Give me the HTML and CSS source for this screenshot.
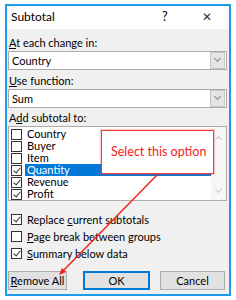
FILE: index.html
```html
<!DOCTYPE html>
<html lang="en">
  <head>
    <meta charset="UTF-8">
    <title>Subtotal</title>
    <link rel="stylesheet" href="styles.css">
  </head>
  <body>
    <div id="dialog">
      <div id="titlebar">
        <div class="title">Subtotal</div>
        <div class="help">?</div>
        <div class="close">&#x2715;</div>
      </div>

      <div id="content">
        <div class="label label_first"><u>A</u>t each change in:</div>
        <div class="combo">
          <span class="combo_text">Country</span>
          <div class="drop"><span class="chev"></span></div>
        </div>

        <div class="label"><u>U</u>se function:</div>
        <div class="combo">
          <span class="combo_text">Sum</span>
          <div class="drop"><span class="chev"></span></div>
        </div>

        <div class="label label_list">A<u>d</u>d subtotal to:</div>
        <div class="listbox">
          <div class="items">
            <div class="item"><span class="cb"></span><span class="txt">Country</span></div>
            <div class="item"><span class="cb"></span><span class="txt">Buyer</span></div>
            <div class="item"><span class="cb"></span><span class="txt">Item</span></div>
            <div class="item selected"><span class="cb on"></span><span class="txt">Quantity</span></div>
            <div class="item"><span class="cb on"></span><span class="txt">Revenue</span></div>
            <div class="item"><span class="cb on"></span><span class="txt">Profit</span></div>
          </div>
          <div class="scroll">
            <span class="chev up"></span>
            <span class="chev"></span>
          </div>
        </div>

        <div class="options">
          <div class="check"><span class="cb on"></span>Replace&nbsp;<u>c</u>urrent subtotals</div>
          <div class="check"><span class="cb"></span><u>P</u>age break between groups</div>
          <div class="check"><span class="cb on"></span><u>S</u>ummary below data</div>
        </div>

        <div class="buttons">
          <div class="btn btn_remove"><u>R</u>emove All</div>
          <div class="btn btn_ok">OK</div>
          <div class="btn btn_cancel">Cancel</div>
        </div>
      </div>

      <!-- annotation drawn over the dialog -->
      <div class="callout">Select this option</div>
      <svg class="arrow" width="222" height="288" viewBox="0 0 222 288">
        <line x1="150" y1="169" x2="55" y2="266" stroke="#f21c1c" stroke-width="1.4"/>
        <polygon points="52,269 59,266 55,262" fill="#f21c1c"/>
      </svg>
    </div>
  </body>
</html>
```

FILE: styles.css
```css
body {
  margin: 0;
  background-color: #ffffff;
  font-family: Lato, "Noto Sans", sans-serif;
  font-size: 11px;
  color: #000000;
}
u {
  text-decoration-thickness: 1px;
  text-underline-offset: 1px;
}
#dialog {
  position: relative;
  width: 222px;
  height: 288px;
  margin: 4px 0 0 5px;

  border: 2px solid #1c9be6;
  background-color: #f0f0f0;
}
#titlebar {
  height: 23px;
  background-color: #ffffff;

  display: flex;
  flex-direction: row;
  align-items: center;
}
.title {
  margin-left: 4px;
  flex: 1;
  margin-top: -3px;
  font-size: 12px;
}
.help {
  width: 14px;
  margin-right: 26px;
  margin-top: -3px;
  font-size: 12.5px;
}
.close {
  width: 14px;
  margin-right: 13px;
  margin-top: -3px;
  font-size: 12px;
  color: #333333;
}
#content {
  padding: 0 2px 0 1px;
}
.label {
  height: 14px;
  line-height: 14px;
  padding-left: 1px;
  margin-top: 4px;
}
.label_first {
  margin-top: 7px;
}
.label_list {
  margin-top: 3px;
}
.combo {
  height: 17px;
  margin-top: 1px;
  border: 1px solid #acacac;
  background-color: #ffffff;

  display: flex;
  flex-direction: row;
  align-items: center;
}
.combo_text {
  flex: 1;
  padding-left: 3px;
}
.drop {
  width: 13px;
  height: 15px;
  margin-right: 1px;
  border: 1px solid #c4c4c4;
  background-color: #e5e5e5;

  display: flex;
  justify-content: center;
  align-items: center;
}
.chev {
  width: 4px;
  height: 4px;
  border-right: 1px solid #8a8a8a;
  border-bottom: 1px solid #8a8a8a;
  transform: translateY(-2px) rotate(45deg);
}
.listbox {
  height: 73px;
  margin-top: 1px;
  border: 1px solid #acacac;
  background-color: #ffffff;

  display: flex;
  flex-direction: row;
}
.items {
  flex: 1;
  padding-top: 1px;
}
.item {
  height: 12px;
  line-height: 12px;

  display: flex;
  flex-direction: row;
  align-items: center;
}
.item .cb {
  margin-left: 2px;
  margin-right: 3px;
}
.item .txt {
  flex: 1;
  height: 12px;
  padding-left: 2px;
  overflow: hidden;
}
.item.selected .txt {
  background-color: #0078d7;
  color: #ffffff;
}
.scroll {
  width: 15px;
  background-color: #f7f7f7;

  display: flex;
  flex-direction: column;
  justify-content: space-between;
  align-items: center;
  padding: 9px 0 6px 0;
}
.scroll .chev {
  border-color: #c8c8c8;
}
.scroll .up {
  transform: translateY(1px) rotate(225deg);
}
.cb {
  position: relative;
  width: 9px;
  height: 9px;
  border: 1px solid #333333;
  background-color: #ffffff;
  flex-shrink: 0;
}
.cb.on::after {
  content: "";
  position: absolute;
  left: 3px;
  top: 0px;
  width: 3px;
  height: 6px;
  border-right: 1px solid #333333;
  border-bottom: 1px solid #333333;
  transform: rotate(40deg);
}
.options {
  margin-top: 10px;
}
.check {
  height: 17px;
  line-height: 17px;

  display: flex;
  flex-direction: row;
  align-items: center;
}
.check .cb {
  margin-left: 3px;
  margin-right: 5px;
}
.buttons {
  margin-top: 9px;

  display: flex;
  flex-direction: row;
}
.btn {
  height: 17px;
  line-height: 17px;
  border: 1px solid #adadad;
  background-color: #e1e1e1;
  text-align: center;
  white-space: nowrap;
}
.btn_remove {
  width: 57px;
}
.btn_ok {
  width: 63px;
  height: 15px;
  line-height: 15px;
  border: 2px solid #0078d7;
  margin-left: 16px;
}
.btn_cancel {
  width: 63px;
  margin-left: 10px;
}
.callout {
  position: absolute;
  left: 94px;
  top: 124px;
  width: 113px;
  height: 44px;
  box-sizing: border-box;

  border: 1px solid #f23c3c;
  background-color: #ffffff;
  box-shadow: 0 0 1px 1px rgba(242, 60, 60, 0.25);

  color: #f21c1c;
  font-size: 12.5px;
  line-height: 42px;
  padding-left: 9px;
}
.arrow {
  position: absolute;
  left: 0;
  top: 0;
  pointer-events: none;
}
```
